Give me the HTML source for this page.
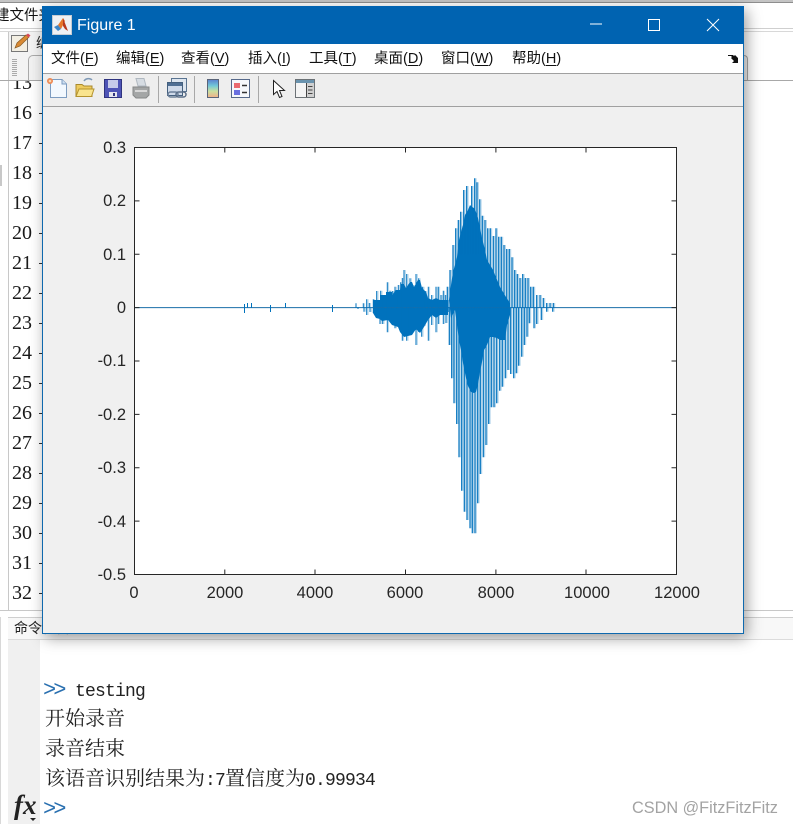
<!DOCTYPE html>
<html><head><meta charset="utf-8">
<style>
html,body{margin:0;padding:0;background:#fff;}
body{width:793px;height:824px;position:relative;overflow:hidden;font-family:"Liberation Sans","Noto Sans CJK SC",sans-serif;}
.a{position:absolute;}
.ln{position:absolute;left:12px;width:24px;text-align:left;font:20px/22px "Liberation Serif",serif;color:#1a1a1a;}
.tk{position:absolute;left:39px;width:3px;height:1px;background:#333;}
.m{position:absolute;top:50px;font-size:14.500px;line-height:18px;color:#111;white-space:nowrap;}
.m u{text-underline-offset:2px;}
.c{position:absolute;left:45px;height:24px;line-height:24px;white-space:nowrap;font-size:20px;color:#222;font-family:"Noto Serif CJK SC",serif;}
.c i{font:normal 18px/24px "Liberation Mono",monospace;letter-spacing:-.8px;}
.p{position:absolute;left:43px;color:#2a70b0;font:normal 22px/24px "Liberation Mono",monospace;letter-spacing:-3px;white-space:nowrap;}
.yl,.xl{position:absolute;font-size:16.500px;line-height:18px;color:#262626;white-space:nowrap;}
.yl{width:60px;left:66px;text-align:right;}
.xl{width:80px;text-align:center;top:584px;}
</style></head>
<body>
<!-- background desktop -->
<div class="a" style="left:0;top:0;width:793px;height:3px;background:#c4c4c4;border-bottom:1px solid #8e8e8e;box-sizing:border-box;"></div>
<div class="a" style="left:-5px;top:6px;font:14.500px/20px 'Liberation Sans','Noto Sans CJK SC',sans-serif;color:#111;">建文件夹</div>
<div class="a" style="left:0;top:28px;width:793px;height:1px;background:#cfcfcf;"></div>
<div class="a" style="left:0;top:31px;width:793px;height:1px;background:#d8d8d8;"></div>
<div class="a" style="left:8px;top:32px;width:1px;height:578px;background:#c8c8c8;"></div>
<div class="a" style="left:9px;top:32px;width:40px;height:23px;background:#f3f3f3;"></div>
<div class="a" style="left:743px;top:55px;width:5px;height:25px;background:#f2f2f2;border:1px solid #aaa;border-left:none;border-bottom:none;border-radius:0 4px 0 0;box-sizing:border-box;"></div>
<div class="a" style="left:0;top:80px;width:793px;height:1px;background:#a8a8a8;"></div>
<svg class="a" style="left:10px;top:33px" width="22" height="20" viewBox="0 0 22 20"><rect x="1.500" y="2.500" width="16" height="16" fill="#f3efe3" stroke="#777"/><path d="M5 15l2-5 9-8 3 2-9 9z" fill="#d98a33" stroke="#8a5a20" stroke-width=".7"/><path d="M16 2l2-1.500 2.500 2-2 2z" fill="#d84a5a"/></svg>
<div class="a" style="left:36px;top:35px;font-size:14px;line-height:16px;color:#222;">编</div>
<div class="a" style="left:0;top:165px;width:2px;height:21px;background:#c8c8c8;"></div>
<div class="ln" style="top:72px">13</div>
<div class="a" style="left:9px;top:55px;width:33px;height:26px;background:#f3f3f3;border-bottom:1px solid #a8a8a8;box-sizing:border-box;"></div>
<div class="a" style="left:28px;top:55px;width:14px;height:25px;border:1px solid #aaa;border-right:none;border-bottom:none;border-radius:5px 0 0 0;box-sizing:border-box;background:#f2f2f2;"></div>
<div class="a" style="left:12px;top:59px;width:5px;height:17px;background:repeating-linear-gradient(#aaa 0 1px,#f3f3f3 1px 2px);"></div>
<div class="ln" style="top:102px">16</div><div class="ln" style="top:132px">17</div><div class="ln" style="top:162px">18</div><div class="ln" style="top:192px">19</div>
<div class="ln" style="top:222px">20</div><div class="ln" style="top:252px">21</div><div class="ln" style="top:282px">22</div><div class="ln" style="top:312px">23</div>
<div class="ln" style="top:342px">24</div><div class="ln" style="top:372px">25</div><div class="ln" style="top:402px">26</div><div class="ln" style="top:432px">27</div>
<div class="ln" style="top:462px">28</div><div class="ln" style="top:492px">29</div><div class="ln" style="top:522px">30</div><div class="ln" style="top:552px">31</div>
<div class="ln" style="top:582px">32</div>
<div class="tk" style="top:113px"></div><div class="tk" style="top:143px"></div><div class="tk" style="top:173px"></div><div class="tk" style="top:203px"></div><div class="tk" style="top:233px"></div><div class="tk" style="top:263px"></div><div class="tk" style="top:293px"></div><div class="tk" style="top:323px"></div><div class="tk" style="top:353px"></div><div class="tk" style="top:383px"></div><div class="tk" style="top:413px"></div><div class="tk" style="top:443px"></div><div class="tk" style="top:473px"></div><div class="tk" style="top:503px"></div><div class="tk" style="top:533px"></div><div class="tk" style="top:563px"></div><div class="tk" style="top:593px"></div>

<!-- command window -->
<div class="a" style="left:0;top:610px;width:793px;height:1px;background:#c8c8c8;"></div>
<div class="a" style="left:8px;top:617px;width:785px;height:23px;background:#f8f8f8;border-top:1px solid #cfcfcf;border-bottom:1px solid #dcdcdc;box-sizing:border-box;"></div>
<div class="a" style="left:14px;top:620px;font-size:14px;line-height:17px;color:#222;">命令行窗口</div>
<div class="a" style="left:8px;top:640px;width:32px;height:184px;background:#f0f0f0;"></div>
<div class="a" style="left:0;top:617px;width:1px;height:207px;background:#d8d8d8;"></div>
<div class="p" style="top:679px">&gt;&gt;</div>
<div class="c" style="top:676px;left:75px"><i>testing</i></div>
<div class="c" style="top:705px">开始录音</div>
<div class="c" style="top:735px">录音结束</div>
<div class="c" style="top:765px">该语音识别结果为<i>:7</i>置信度为<i>0.99934</i></div>
<div class="p" style="top:798px">&gt;&gt;</div>
<div class="a" style="left:14px;top:790px;font:italic bold 27px/30px 'Liberation Serif',serif;color:#222;">fx</div>
<div class="a" style="left:30px;top:818px;width:0;height:0;border-left:3px solid transparent;border-right:3px solid transparent;border-top:3px solid #222;"></div>
<div class="a" style="left:632px;top:798px;font-size:16.300px;line-height:20px;color:#a3a3a3;white-space:nowrap;">CSDN @FitzFitzFitz</div>

<!-- figure window -->
<div class="a" style="left:42px;top:6px;width:702px;height:628px;background:#f0f0f0;border:1px solid #0f69ae;border-top:none;box-sizing:border-box;box-shadow:3px 4px 14px rgba(0,0,0,.38);"></div>
<div class="a" style="left:42px;top:6px;width:702px;height:38px;background:#0063b1;"></div>
<svg class="a" style="left:52px;top:15px" width="20" height="20" viewBox="0 0 20 20"><rect x=".5" y=".5" width="19" height="19" fill="#eef1f4" stroke="#c6ccd2"/><path d="M2 12l4-2 3 4-3 2z" fill="#3f86c5"/><path d="M6 10l5-7 2 3-4 8z" fill="#e5772a"/><path d="M11 3l5 13-3-2-2-3z" fill="#b8391c"/></svg>
<div class="a" style="left:77px;top:16px;color:#fff;font-size:16px;line-height:20px;">Figure 1</div>
<svg class="a" style="left:585px;top:12px" width="140" height="24" viewBox="0 0 140 24" fill="none" stroke="#fff" stroke-width="1"><path d="M5 12H17"/><rect x="63.500" y="7.500" width="11" height="11"/><path d="M122 7L134 19M134 7L122 19"/></svg>
<div class="a" style="left:43px;top:44px;width:700px;height:30px;background:#fff;border-bottom:1px solid #a0a0a0;box-sizing:border-box;"></div>
<div class="m" style="left:51px">文件(<u>F</u>)</div>
<div class="m" style="left:116px">编辑(<u>E</u>)</div>
<div class="m" style="left:181px">查看(<u>V</u>)</div>
<div class="m" style="left:248px">插入(<u>I</u>)</div>
<div class="m" style="left:309px">工具(<u>T</u>)</div>
<div class="m" style="left:374px">桌面(<u>D</u>)</div>
<div class="m" style="left:441px">窗口(<u>W</u>)</div>
<div class="m" style="left:512px">帮助(<u>H</u>)</div>
<svg class="a" style="left:728px;top:54px" width="11" height="10" viewBox="0 0 11 10"><path d="M0 1h5l1 1 1-1 3 3v5H4l2-2-3-3 1-1-1-1H0z" fill="#111"/></svg>
<div class="a" style="left:43px;top:74px;width:700px;height:33px;background:#eeeeee;border-bottom:1px solid #a0a0a0;box-sizing:border-box;"></div>
<!-- toolbar -->
<svg class="a" style="left:43px;top:74px" width="290" height="32" viewBox="43 74 290 32">
<path d="M50.500 79.500H62L66.500 84V97.500H50.500Z" fill="#f2f8fe" stroke="#7d9cc0"/><path d="M62 79.500V84H66.500" fill="#cfe0f2" stroke="#7d9cc0"/>
<circle cx="50" cy="81" r="3" fill="#ee8a55"/><circle cx="50" cy="81" r="1.300" fill="#f8d7b0"/>
<path d="M76 96.500V84.500H82L84 86H92V96.500Z" fill="#eecb5e" stroke="#a98a2d"/><path d="M76 96.500L79 89H94L91.500 96.500Z" fill="#f9e48e" stroke="#b4932f"/><path d="M84 81c2-3 6-3 8-1" fill="none" stroke="#7e98b5" stroke-width="1.500"/>
<rect x="104.500" y="79.500" width="17" height="18" fill="#4e54b6" stroke="#30347f"/><rect x="108" y="80" width="10" height="8" fill="#c6cbea"/><rect x="109" y="92" width="8" height="5" fill="#e6e6ee"/><rect x="113" y="93" width="2" height="3" fill="#30347f"/>
<path d="M136 78.500H144L146 86H138Z" fill="#d6dce2" stroke="#b0b8c0"/><path d="M133 87H149V95L146 98H136L133 95Z" fill="#a4a6a6" stroke="#868888"/><rect x="135" y="90" width="12" height="2" fill="#d8d8d8"/>
<rect x="158" y="76" width="1" height="27" fill="#a8a8a8"/>
<rect x="171.500" y="78.500" width="15" height="13" fill="#dde6f0" stroke="#5a7491"/><rect x="167.500" y="82.500" width="15" height="13" fill="#cfdaea" stroke="#44607f"/><rect x="168" y="83" width="14" height="3" fill="#4f6f94"/>
<rect x="168" y="92" width="10" height="5" rx="2.500" fill="none" stroke="#6c8099" stroke-width="1.500"/><rect x="176" y="92" width="10" height="5" rx="2.500" fill="none" stroke="#5a6e88" stroke-width="1.500"/>
<rect x="194" y="76" width="1" height="27" fill="#a8a8a8"/>
<defs><linearGradient id="cb" x1="0" y1="0" x2="0" y2="1"><stop offset="0" stop-color="#5a7fcf"/><stop offset=".35" stop-color="#72c8d8"/><stop offset=".65" stop-color="#c9e0a0"/><stop offset="1" stop-color="#f2b089"/></linearGradient></defs>
<rect x="207.500" y="79.500" width="11" height="18" fill="url(#cb)" stroke="#5a6478"/>
<rect x="231.500" y="79.500" width="18" height="18" fill="#f6f8fb" stroke="#56698a"/><rect x="234" y="83" width="6" height="5" fill="#ea6a70"/><rect x="234" y="90" width="6" height="5" fill="#6a70e0"/><path d="M242 85.500H247M242 92.500H247" stroke="#333" stroke-width="1.500"/>
<rect x="258" y="76" width="1" height="27" fill="#a8a8a8"/>
<path d="M273.500 80.500V94.500L277 91.500L279.500 97.500L282 96.500L279.500 90.500H284.500Z" fill="#fff" stroke="#222"/>
<rect x="295.500" y="79.500" width="19" height="18" fill="#f4f4f4" stroke="#6c7276"/><rect x="296" y="80" width="18" height="3" fill="#6a93ae"/><rect x="306" y="83" width="8" height="14" fill="#d0d0d0"/><path d="M306.500 83V97M308 86.500H312.500M308 90H312.500M308 93.500H312.500" stroke="#444"/>
</svg>

<!-- plot -->
<div class="a" style="left:134px;top:147px;width:543px;height:428px;background:#fff;"></div>
<svg class="a" style="left:120px;top:140px" width="570" height="445" viewBox="120 140 570 445">
<g fill="#0072bd" stroke="none">
<polygon points="373,300 380,300 380,295 386,295 386,292 392,292 392,295 396,290 400,290 401,284 404,284 406,288 410,282 412,282 414,287 418,280 420,280 422,288 424,290 426,292 428,298 432,300 436,298 440,300 448,300 448,315 440,315 436,318 432,315 428,320 424,327 420,333 416,329 412,335 408,336 404,337 400,332 398,327 392,325 388,320 382,321 380,319 376,318 373,313"/>
<polygon points="449,300 451,285 453,272 455,265 457,257 459,240 461,232 463,225 465,215 468,210 470,205 472,207 474,208 476,212 478,218 480,228 482,238 485,250 487,260 490,265 493,270 495,275 498,282 500,287 503,292 506,297 510,303 510,315 507,325 505,340 500,340 497,338 493,337 490,337 487,345 484,350 482,362 480,372 478,384 476,392 474,393 471,392 468,386 466,378 463,363 461,350 459,340 457,325 455,310 451,318"/>
</g>
<g fill="none" stroke="#0072bd" stroke-width="1">
<path d="M134.500 307.600H676.500" stroke="#1a6ea8"/>
<path d="M244.500 304V313M247.500 303V308M251.500 303V308M270.500 305V312M285.500 303V308M332.500 305V312M356 303.300V308M448 300V312M358 307V309"/>
<g id="w1">
<path d="M363.300 303.300V307.600M366.700 299.300V307.600M369.300 303V307.600M373.300 299.300V307.600M376.700 291V307.600M380.700 290.700V307.600M383.300 295V307.600M387.300 282.300V307.600M390 290.700V307.600M392.700 291V307.600M395 286.700V307.600M398.300 285V307.600M400.700 282.300V307.600M402.300 278V307.600M404 270V307.600M406.700 274V307.600M410 278.300V307.600M412.700 285V307.600M416 274V307.600M418.700 278.300V307.600M421 287V307.600M422.700 286.700V307.600M425.300 291V307.600M428.300 286.700V307.600M431.700 295V307.600M436 286.700V307.600M438.300 286.700V307.600M441 295V307.600M443.300 290.700V307.600M445.300 295V307.600"/>
<path d="M364 311.700V307.600M366.700 315V307.600M370 312V307.600M373.300 313V307.600M376.700 316V307.600M380 324V307.600M382.700 324V307.600M387.300 332.300V307.600M390 322V307.600M395 328.300V307.600M400 330V307.600M402.300 340.700V307.600M406.700 340.700V307.600M409.300 333V307.600M411.700 328.300V307.600M416 345V307.600M418.700 332V307.600M421.700 336.700V307.600M424 326V307.600M428.300 340.700V307.600M431.700 325V307.600M436 332.300V307.600M438.300 324V307.600M443.300 324V307.600M446 323V307.600"/>
<path stroke-width="1.200" d="M447.300 286.700V307.600M450 270V307.600M453 245V307.600M455.700 228.300V307.600M458.300 220V307.600M460.700 211.700V307.600M463.700 190V307.600M466.700 186V307.600M469 211V307.600M471.700 186V307.600M474.700 178.300V307.600M477 182.300V307.600M479.700 199.300V307.600M482.300 215.700V307.600M485 220V307.600M487.700 228.300V307.600M490.300 228.300V307.600M493.300 236V307.600M496 228.300V307.600M498.700 236.700V307.600M501.300 236.700V307.600M504 245V307.600M506.700 249V307.600M509.300 249V307.600M512 257.300V307.600M514.700 270V307.600M517.300 274V307.600M520 278V307.600M522.700 274V307.600M525.300 278V307.600M528 278V307.600M530.700 286.700V307.600M533.300 286.700V307.600M536.700 295V307.600M540 295V307.600M543.300 298V307.600M546.700 303V307.600M550 303V307.600M553.300 303V307.600"/>
<path stroke-width="1.200" d="M449.300 345V307.600M451.700 378.300V307.600M454 403.300V307.600M456.700 424V307.600M459 457.300V307.600M461.700 490.700V307.600M464.300 511.700V307.600M467 520V307.600M470 528.300V307.600M472.300 533.300V307.600M475 533.300V307.600M477.700 503.300V307.600M480.300 474V307.600M483.300 457.300V307.600M486 445V307.600M488.700 424V307.600M491.300 407.300V307.600M494 407.300V307.600M496.700 403.300V307.600M499.700 390.700V307.600M502.300 386.700V307.600M505.300 378.300V307.600M508 370V307.600M510.700 374V307.600M513.700 378.300V307.600M516.300 373.300V307.600M518.700 365.700V307.600M521.700 356.700V307.600M524.300 345V307.600M527 336.700V307.600M529.300 323.300V307.600M534 328.300V307.600M536.700 324V307.600M541.300 320V307.600M546.700 311.700V307.600M552.700 311.700V307.600"/>
</g>
<use href="#w1" transform="translate(1.300,0)" opacity=".3"/>
</g>
<g fill="none" stroke="#262626" stroke-width="1">
<rect x="134.500" y="147.500" width="542" height="427"/>
<path d="M224.800 574.500v-5M315 574.500v-5M405.500 574.500v-5M495.900 574.500v-5M586 574.500v-5M224.800 147.500v5M315 147.500v5M405.500 147.500v5M495.900 147.500v5M586 147.500v5"/>
<path d="M134.500 200.900h5M134.500 254.300h5M134.500 307.600h5M134.500 361h5M134.500 414.400h5M134.500 467.800h5M134.500 521.100h5M676.500 200.900h-5M676.500 254.300h-5M676.500 307.600h-5M676.500 361h-5M676.500 414.400h-5M676.500 467.800h-5M676.500 521.100h-5"/>
</g>
</svg>
<div class="yl" style="top:139px">0.3</div><div class="yl" style="top:192px">0.2</div><div class="yl" style="top:246px">0.1</div><div class="yl" style="top:299px">0</div><div class="yl" style="top:352px">-0.1</div><div class="yl" style="top:406px">-0.2</div><div class="yl" style="top:459px">-0.3</div><div class="yl" style="top:513px">-0.4</div><div class="yl" style="top:566px">-0.5</div>
<div class="xl" style="left:94px">0</div><div class="xl" style="left:185px">2000</div><div class="xl" style="left:275px">4000</div><div class="xl" style="left:365px">6000</div><div class="xl" style="left:456px">8000</div><div class="xl" style="left:547px">10000</div><div class="xl" style="left:637px">12000</div>
</body></html>
